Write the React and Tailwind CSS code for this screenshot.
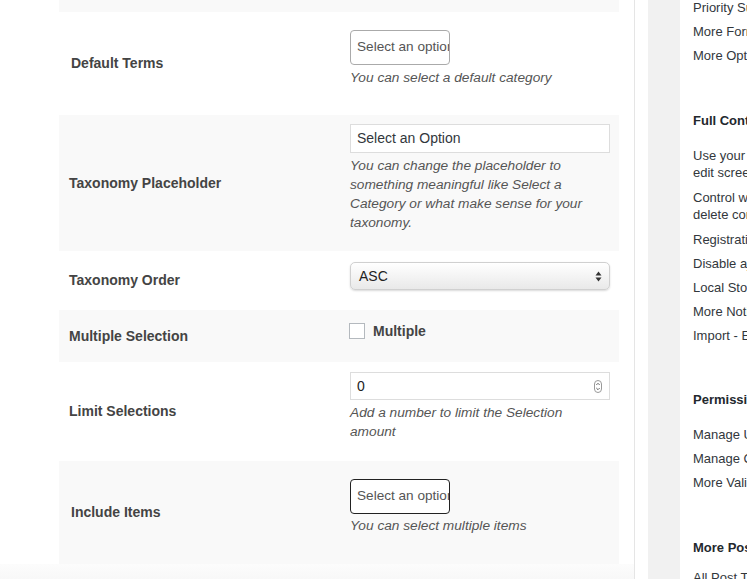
const font = { fontFamily: '"Liberation Sans", Arial, sans-serif' }

function Row({ label, grey, className = '', children, labelClass = 'pl-[10px]' }) {
  return (
    <div className={`flex items-center ${grey ? 'bg-[#f9f9f9]' : 'bg-white'} ${className}`}>
      <div className={`w-[291px] shrink-0 text-[14px] font-bold text-[#444] ${labelClass}`}>{label}</div>
      <div className="w-[260px] self-start">{children}</div>
    </div>
  )
}

function Desc({ children }) {
  return <p className="text-[13.7px] italic leading-[19px] text-[#555] whitespace-nowrap">{children}</p>
}

function Select2Box({ focused }) {
  return (
    <div
      className={`w-[100px] h-[35px] rounded-[4px] border flex items-center pl-[6px] overflow-hidden whitespace-nowrap text-[13.6px] text-[#555] bg-white ${
        focused ? 'border-[#222]' : 'border-[#aaa]'
      }`}
    >
      Select an option
    </div>
  )
}

const sidebar = [
  { t: ['Priority Support'], gap: 'mt-0' },
  { t: ['More Form Elements'] },
  { t: ['More Options'] },
  { t: ['Full Control'], b: true, gap: 'mt-[48px]' },
  { t: ['Use your form in the backend admin', 'edit screen'], gap: 'mt-[18px]' },
  { t: ['Control who can create, edit and', 'delete content'], gap: 'mt-[8px]' },
  { t: ['Registration'], gap: 'mt-[8px]' },
  { t: ['Disable ajax form submission'] },
  { t: ['Local Storage'] },
  { t: ['More Notification Options'] },
  { t: ['Import - Export Forms'] },
  { t: ['Permissions Management'], b: true, gap: 'mt-[47px]' },
  { t: ['Manage User Roles'], gap: 'mt-[18px]' },
  { t: ['Manage Capabilities'] },
  { t: ['More Validation Options'] },
  { t: ['More Post Types'], b: true, gap: 'mt-[48px]' },
  { t: ['All Post Types'], gap: 'mt-[13px]' },
]

export default function App() {
  return (
    <div style={font} className="w-[747px] h-[579px] overflow-hidden bg-white flex text-[#444]">
      <div className="w-[635px] shrink-0 border-r border-[#e5e5e5] flex flex-col">
        <div className="pl-[59px] w-[619px]">
          <div className="h-[12px] bg-[#f9f9f9]" />

          <Row label="Default Terms" className="h-[103px]" labelClass="pl-[12px]">
            <div className="pt-[18px]">
              <Select2Box />
              <div className="mt-[3px]">
                <Desc>You can select a default category</Desc>
              </div>
            </div>
          </Row>

          <Row label="Taxonomy Placeholder" grey className="h-[136px]">
            <div className="pt-[9px]">
              <div className="h-[29px] border border-[#ddd] bg-white flex items-center px-[6px] text-[14px] text-[#32373c]">
                Select an Option
              </div>
              <div className="mt-[3px]">
                <Desc>
                  You can change the placeholder to
                  <br />
                  something meaningful like Select a
                  <br />
                  Category or what make sense for your
                  <br />
                  taxonomy.
                </Desc>
              </div>
            </div>
          </Row>

          <Row label="Taxonomy Order" className="h-[59px]">
            <div className="pt-[11px]">
              <div className="h-[28px] rounded-[5px] border border-[#d0d0d0] bg-gradient-to-b from-white to-[#e9e9e9] shadow-[0_1px_2px_rgba(0,0,0,0.15)] flex items-center justify-between pl-[8px] pr-[7px] text-[14px] text-[#222]">
                <span>ASC</span>
                <svg width="7" height="11" viewBox="0 0 7 11">
                  <path d="M3.5 0.5 L6.5 4.5 H0.5 Z" fill="#333" />
                  <path d="M3.5 10.5 L6.5 6.5 H0.5 Z" fill="#333" />
                </svg>
              </div>
            </div>
          </Row>

          <Row label="Multiple Selection" grey className="h-[52px]">
            <div className="pt-[11px] flex items-center">
              <div className="w-[16px] h-[16px] border border-[#b4b9be] bg-white ml-[-1px]" />
              <span className="ml-[8px] text-[14px] leading-[20px] font-bold text-[#444]">Multiple</span>
            </div>
          </Row>

          <Row label="Limit Selections" className="h-[99px]">
            <div className="pt-[10px]">
              <div className="h-[28px] border border-[#ddd] bg-white flex items-center justify-between pl-[6px] pr-[7px] text-[14px] text-[#222]">
                <span>0</span>
                <svg width="8" height="13" viewBox="0 0 8 13">
                  <rect x="0.5" y="0.5" width="7" height="12" rx="3.5" fill="white" stroke="#999" />
                  <path d="M2.3 5 L4 3.3 L5.7 5" fill="none" stroke="#555" strokeWidth="0.9" />
                  <path d="M2.3 8 L4 9.7 L5.7 8" fill="none" stroke="#555" strokeWidth="0.9" />
                </svg>
              </div>
              <div className="mt-[3px]">
                <Desc>
                  Add a number to limit the Selection
                  <br />
                  amount
                </Desc>
              </div>
            </div>
          </Row>

          <Row label="Include Items" grey className="h-[103px]" labelClass="pl-[12px]">
            <div className="pt-[18px]">
              <Select2Box focused />
              <div className="mt-[2px]">
                <Desc>You can select multiple items</Desc>
              </div>
            </div>
          </Row>
        </div>
        <div className="flex-1 bg-gradient-to-b from-[#fcfcfc] to-[#f8f8f8]" />
      </div>

      <div className="w-[13px] shrink-0 bg-white" />
      <div className="w-[32px] shrink-0 bg-[#f1f1f1]" />

      <div className="w-[240px] shrink-0 pl-[13px] text-[13px] text-[#32373c]">
        <div className="-mt-[1px]">
          {sidebar.map((s, i) => (
            <div
              key={i}
              className={`${s.gap || 'mt-[7px]'} ${s.b ? 'font-bold text-[#23282d]' : ''} leading-[17px] whitespace-nowrap`}
            >
              {s.t.map((line, j) => (
                <div key={j}>{line}</div>
              ))}
            </div>
          ))}
        </div>
      </div>
    </div>
  )
}
